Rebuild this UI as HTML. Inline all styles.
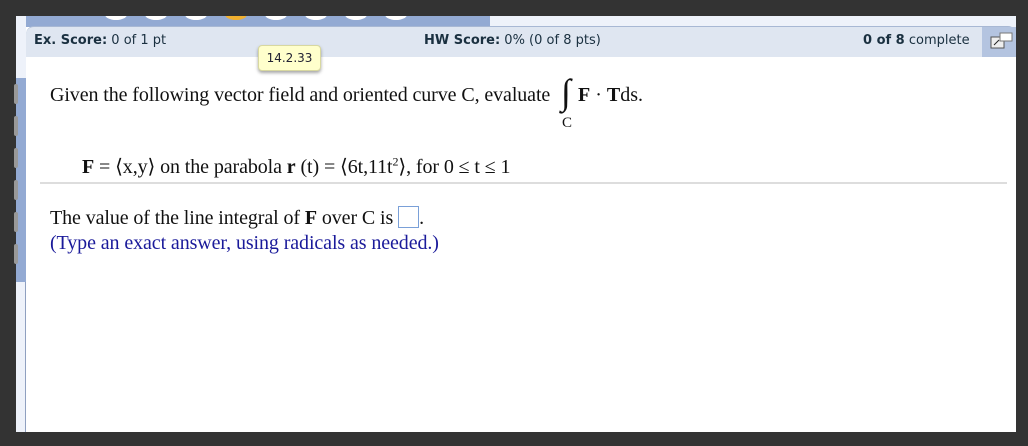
<!DOCTYPE html>
<html><head><style>
body{margin:0;width:1028px;height:446px;background:#333;position:relative;overflow:hidden;font-family:"Liberation Serif",serif}
.a{position:absolute}
.sans{font-family:"DejaVu Sans",sans-serif}
.c{position:absolute;top:-7px;width:22px;height:11px;background:#fff;border-radius:50%}
</style></head><body>
<div class="a" style="left:16px;top:16px;width:1000px;height:416px;background:#fff"></div>
<div class="a" style="left:16px;top:16px;width:10px;height:416px;background:#eef2fa"></div>
<div class="a" style="left:16px;top:78px;width:10px;height:204px;background:#93aad3"></div>
<div class="a" style="left:25px;top:282px;width:1px;height:150px;background:#8fa0c0"></div>
<div class="a" style="left:14px;top:84px;width:4px;height:20px;background:#999;border-radius:3px"></div>
<div class="a" style="left:14px;top:116px;width:4px;height:20px;background:#999;border-radius:3px"></div>
<div class="a" style="left:14px;top:148px;width:4px;height:20px;background:#999;border-radius:3px"></div>
<div class="a" style="left:14px;top:180px;width:4px;height:20px;background:#999;border-radius:3px"></div>
<div class="a" style="left:14px;top:212px;width:4px;height:20px;background:#999;border-radius:3px"></div>
<div class="a" style="left:14px;top:244px;width:4px;height:20px;background:#999;border-radius:3px"></div>
<div class="a" style="left:26px;top:16px;width:464px;height:11px;background:#93aad3;overflow:hidden">
<div class="c" style="left:79px"></div><div class="c" style="left:119px"></div><div class="c" style="left:159px"></div><div class="c" style="left:199px;background:#f0b030"></div><div class="c" style="left:239px"></div><div class="c" style="left:279px"></div><div class="c" style="left:319px"></div><div class="c" style="left:359px"></div>
</div>
<div class="a" style="left:490px;top:16px;width:526px;height:11px;background:#eef2fa"></div>
<div class="a" style="left:26px;top:26px;width:990px;height:31px;background:#dfe6f1;border-radius:8px 8px 0 0;border-top:1px solid #a8b8d4;box-sizing:border-box"></div>
<div class="a" style="left:982px;top:27px;width:34px;height:30px;background:#b4c4e0"></div>
<svg class="a" style="left:990px;top:32px" width="24" height="18"><rect x="1" y="5" width="13" height="11" fill="#eee" stroke="#555"/><rect x="10" y="1" width="12" height="8" fill="#fff" stroke="#777"/><path d="M4 13 L9 8" stroke="#222"/></svg>
<div class="a sans" style="left:34px;top:33px;font-size:13px;color:#1a3040"><b>Ex. Score:</b> 0 of 1 pt</div>
<div class="a sans" style="left:424px;top:33px;font-size:13px;color:#1a3040"><b>HW Score:</b> 0% (0 of 8 pts)</div>
<div class="a sans" style="left:863px;top:33px;font-size:13px;color:#1a3040"><b>0 of 8</b> complete</div>
<div class="a sans" style="left:258px;top:45px;width:61px;height:24px;background:#ffffcc;border:1px solid #d8d8a0;border-radius:4px;box-shadow:0 2px 3px rgba(0,0,0,.35);font-size:12px;color:#223;text-align:center;line-height:24px">14.2.33</div>
<div class="a" style="left:50px;top:84px;font-size:20px;color:#111;white-space:nowrap;letter-spacing:-0.1px">Given the following vector field and oriented curve C, evaluate</div>
<div class="a" style="left:561px;top:72px;font-size:36px;color:#111;font-style:italic;line-height:40px">∫</div>
<div class="a" style="left:578px;top:84px;font-size:20px;color:#111"><b>F</b> · <b>T</b>ds.</div>
<div class="a" style="left:562px;top:115px;font-size:15px;color:#111">C</div>
<div class="a" style="left:82px;top:154px;font-size:20px;color:#111;white-space:nowrap;letter-spacing:-0.1px"><b>F</b> = ⟨x,y⟩ on the parabola <b>r</b> (t) = ⟨6t,11t<sup style="font-size:12px">2</sup>⟩, for 0 ≤ t ≤ 1</div>
<div class="a" style="left:40px;top:182px;width:967px;height:2px;background:#ddd"></div>
<div class="a" style="left:50px;top:206px;font-size:20px;color:#111;white-space:nowrap;letter-spacing:-0.1px">The value of the line integral of <b>F</b> over C is <span style="display:inline-block;width:19px;height:20px;border:1px solid #7aa0d8;vertical-align:-4px"></span>.</div>
<div class="a" style="left:50px;top:232px;font-size:20px;color:#1a1a9a;white-space:nowrap;letter-spacing:-0.1px">(Type an exact answer, using radicals as needed.)</div>
<div class="a" style="left:0;top:432px;width:1028px;height:14px;background:#333"></div>
</body></html>
